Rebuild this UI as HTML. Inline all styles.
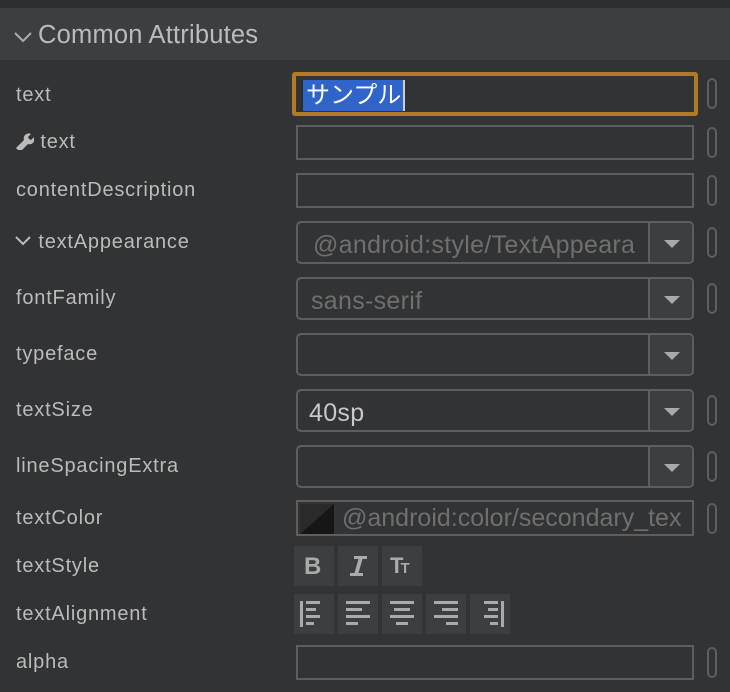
<!DOCTYPE html>
<html><head><meta charset="utf-8"><style>
*{box-sizing:border-box;margin:0;padding:0}
body{width:730px;height:692px;background:#313335;font-family:"Liberation Sans","Noto Sans CJK JP",sans-serif;position:relative;overflow:hidden;color:#bbb}
.top{position:absolute;left:0;top:0;width:730px;height:8px;background:#2b2d2f}
.hdr{position:absolute;left:0;top:8px;width:730px;height:52px;background:#3c3f41}
.hdr span{position:absolute;left:38px;top:13px;font-size:25.5px;color:#bbb;letter-spacing:0.2px}
.l{position:absolute;left:16px;font-size:20px;color:#bbb;white-space:nowrap;letter-spacing:0.8px}
.f{position:absolute;left:296px;width:398px;border:2px solid #5e5e5e}
.d{border-radius:5px}
.d .b{position:absolute;right:0;top:0;bottom:0;width:44px;background:#3c3f41;border-left:2px solid #5e5e5e;border-radius:0 3px 3px 0}
.d .b:after{content:"";position:absolute;left:14px;top:50%;margin-top:-3px;border-left:8px solid transparent;border-right:8px solid transparent;border-top:8px solid #a9a9a9}
.v{position:absolute;left:13px;font-size:25px;color:#6f6f6f;white-space:nowrap;letter-spacing:0.3px}
.p{position:absolute;left:707px;width:10px;height:31px;border:2px solid #5e5e5e;border-radius:5px}
.btn{position:absolute;width:40px;height:40px;background:#3c3f41}
.btn i{position:absolute;background:#aaa;height:3px}
</style></head><body>
<div class="top"></div>
<div class="hdr"><svg style="position:absolute;left:14px;top:24px" width="18" height="11"><path d="M1 1l8 8 8-8" fill="none" stroke="#aaa" stroke-width="2"/></svg><span>Common Attributes</span></div>

<div class="l" style="top:84px">text</div>
<div class="l" style="top:131px;left:14px"><svg width="20" height="18" style="vertical-align:-2px"><path d="M2 16l8-8a5 5 0 0 1 7-6l-3 3 1 2 2 1 3-3a5 5 0 0 1-6 7l-8 8z" fill="#bbb"/></svg> text</div>
<div class="l" style="top:179px">contentDescription</div>
<div class="l" style="top:231px;left:14px"><svg width="18" height="10" style="vertical-align:2px"><path d="M2 1l7 7 7-7" fill="none" stroke="#bbb" stroke-width="2"/></svg> textAppearance</div>
<div class="l" style="top:287px">fontFamily</div>
<div class="l" style="top:343px">typeface</div>
<div class="l" style="top:399px">textSize</div>
<div class="l" style="top:455px">lineSpacingExtra</div>
<div class="l" style="top:507px">textColor</div>
<div class="l" style="top:555px">textStyle</div>
<div class="l" style="top:603px">textAlignment</div>
<div class="l" style="top:651px">alpha</div>

<div style="position:absolute;left:292px;top:72px;width:406px;height:44px;border:4px solid #b07b24;border-radius:3px">
<div style="position:absolute;left:5px;top:4px;height:31px;background:#2f65ca;color:#fff;font-size:24px;line-height:31px;padding:0 2px 0 3px;border-left:2px solid #2b2d30;border-right:2px solid #ccc">サンプル</div></div>
<div class="p" style="top:78px"></div>

<div class="f" style="top:125px;height:35px"></div><div class="p" style="top:127px"></div>
<div class="f" style="top:173px;height:35px"></div><div class="p" style="top:175px"></div>
<div class="f d" style="top:221px;height:43px"><div class="v" style="top:8px;left:15px">@android:style/TextAppeara</div><div class="b"></div></div><div class="p" style="top:227px"></div>
<div class="f d" style="top:277px;height:43px"><div class="v" style="top:8px">sans-serif</div><div class="b"></div></div><div class="p" style="top:283px"></div>
<div class="f d" style="top:333px;height:43px"><div class="b"></div></div>
<div class="f d" style="top:389px;height:43px"><div class="v" style="top:8px;left:11px;color:#c8c8c8">40sp</div><div class="b"></div></div><div class="p" style="top:395px"></div>
<div class="f d" style="top:445px;height:43px"><div class="b"></div></div><div class="p" style="top:451px"></div>
<div class="f" style="top:500px;height:36px;overflow:hidden"><svg style="position:absolute;left:2px;top:2px" width="34" height="30"><rect width="34" height="30" fill="#2a2a2a"/><path d="M0 30L34 0V30z" fill="#161616"/></svg><div class="v" style="top:2px;left:44px;font-size:25px;letter-spacing:0">@android:color/secondary_tex</div></div><div class="p" style="top:503px"></div>

<div class="btn" style="left:294px;top:546px"><span style="position:absolute;left:10px;top:7px;font-size:24px;font-weight:bold;color:#aaa">B</span></div>
<div class="btn" style="left:338px;top:546px"><svg width="40" height="40"><path d="M16 10h13v3h-4.5l-4 14H25v3H12v-3h4.5l4-14H16z" fill="#aaa"/></svg></div>
<div class="btn" style="left:382px;top:546px"><span style="position:absolute;left:8px;top:7px;font-size:22px;font-weight:bold;color:#aaa;letter-spacing:-3px">T<span style="font-size:15px">T</span></span></div>

<div class="btn" style="left:294px;top:594px"><i style="left:6px;top:7px;width:3px;height:26px"></i><i style="left:12px;top:7px;width:14px"></i><i style="left:12px;top:14px;width:10px"></i><i style="left:12px;top:21px;width:14px"></i><i style="left:12px;top:28px;width:8px"></i></div>
<div class="btn" style="left:338px;top:594px"><i style="left:8px;top:7px;width:24px"></i><i style="left:8px;top:14px;width:16px"></i><i style="left:8px;top:21px;width:24px"></i><i style="left:8px;top:28px;width:12px"></i></div>
<div class="btn" style="left:382px;top:594px"><i style="left:8px;top:7px;width:24px"></i><i style="left:12px;top:14px;width:16px"></i><i style="left:8px;top:21px;width:24px"></i><i style="left:14px;top:28px;width:12px"></i></div>
<div class="btn" style="left:426px;top:594px"><i style="left:8px;top:7px;width:24px"></i><i style="left:16px;top:14px;width:16px"></i><i style="left:8px;top:21px;width:24px"></i><i style="left:20px;top:28px;width:12px"></i></div>
<div class="btn" style="left:470px;top:594px"><i style="left:31px;top:7px;width:3px;height:26px"></i><i style="left:14px;top:7px;width:14px"></i><i style="left:18px;top:14px;width:10px"></i><i style="left:14px;top:21px;width:14px"></i><i style="left:20px;top:28px;width:8px"></i></div>

<div class="f" style="top:645px;height:35px"></div><div class="p" style="top:647px"></div>
</body></html>
